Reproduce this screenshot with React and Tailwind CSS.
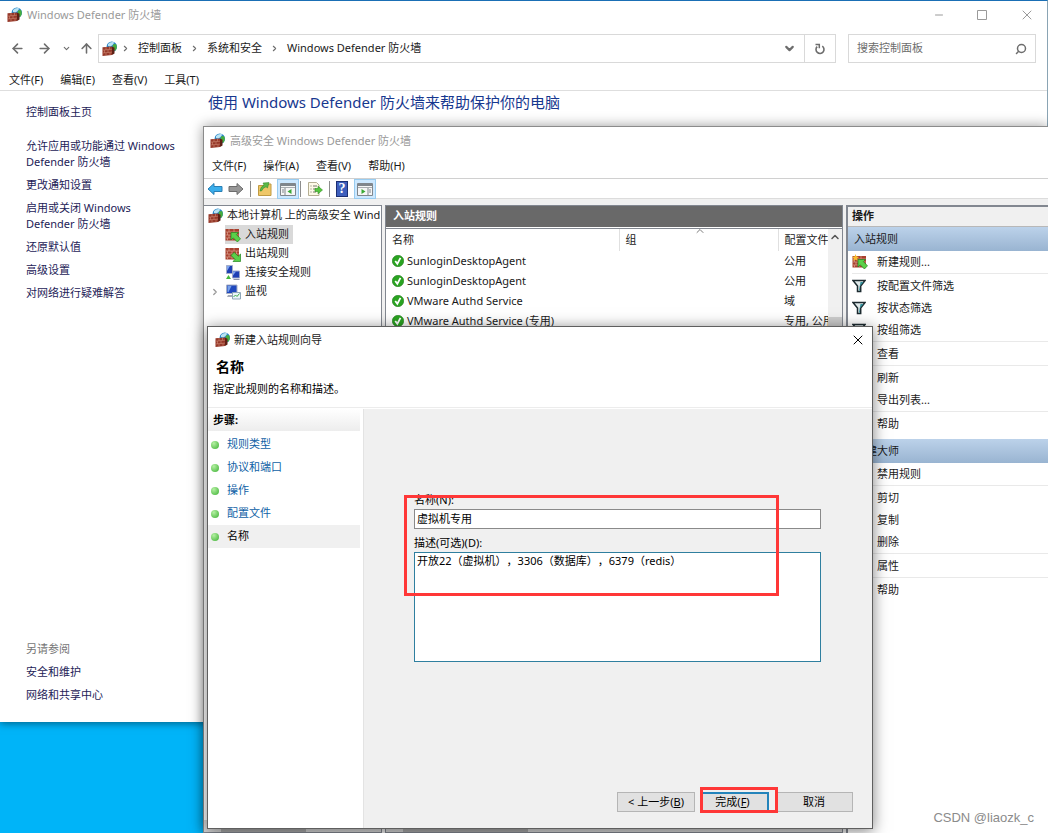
import React from "react";
import clsx from "clsx";
import {ArrowLeft, ArrowRight, ArrowUp, ChevronDown, ChevronRight, ChevronUp, Minus, Search, X} from "lucide-react";

const FirewallIcon = () => (
  <svg width="16" height="16" viewBox="0 0 16 16" className="shrink-0" aria-hidden="true">
    <circle cx="9.8" cy="5.8" r="5.2" fill="#2b86c8" />
    <path d="M6 3 Q8.5 0.5 12 1.2 Q12 3 10.5 4 L8.5 5.5 L6 5z" fill="#b9e3f3" />
    <path d="M11 3.5 L14 3 Q16 7 13 10 L10.5 7z" fill="#46ad3e" />
    <path d="M0.5 6.2 L10 5.4 V14 L0.5 15z" fill="#96392a" />
    <path d="M0.5 9.2 L10 8.2 M0.5 12 L10 11.1 M4 6 V9 M7.5 5.6 V8.3 M2.5 9 V12 M6 8.6 V11.5 M4 11.7 V14.5 M8 11.4 V14.2" stroke="#cf8a73" strokeWidth="0.6" />
    <path d="M10 5.4 L12.5 6.8 V12.5 L10 14z" fill="#5d2015" />
  </svg>
);

const RuleIcon = ({out, star}) => (
  <svg width="16" height="16" viewBox="0 0 16 16" className="shrink-0" aria-hidden="true">
    <rect x="0.5" y="2" width="13.5" height="11.5" fill="#a8402e" />
    <path d="M0.5 5H14M0.5 8H14M0.5 11H14M4 2V5M9 2V5M2.5 5V8M7 5V8M11.5 5V8M4 8V11M2.5 11V13.5M7 11V13.5" stroke="#dba08e" strokeWidth="0.7" />
    {out
      ? <path d="M15.5 15.5 H8 L10 13.4 L6 9.4 L9.2 6.3 L13.2 10.3 L15.5 8z" fill="#5bd04a" stroke="#21851c" strokeWidth="0.7" />
      : <path d="M6 5.5 H13.5 L11.4 7.6 L15.5 11.8 L12.4 15 L8.2 10.8 L6 13z" fill="#5bd04a" stroke="#21851c" strokeWidth="0.7" />}
    {star && <path d="M3.5 0 L4.5 2.5 L7 3 L5 4.5 L5.5 7 L3.5 5.5 L1 7 L2 4.5 L0 3 L2.7 2.5z" fill="#f9bd2d" />}
  </svg>
);

const ConnectionIcon = () => (
  <svg width="16" height="16" viewBox="0 0 16 16" aria-hidden="true">
    <path d="M1.5 0.5h6v8h-6z" fill="#1d3fb4" stroke="#a3adc8" />
    <path d="M7.5 6h7v7h-7z" fill="#1d3fb4" stroke="#9ba6c8" />
    <path d="M2 1h3l-3 5zM8 6.5h3l-3 4z" fill="#7fa5ef" />
    <path d="M8.5 14.5h6" stroke="#8892a8" />
    <path d="M1 14l2.5-4L6 14z" fill="#46b83c" />
  </svg>
);

const MonitorIcon = () => (
  <svg width="16" height="16" viewBox="0 0 16 16" aria-hidden="true">
    <path d="M1.5 1h10.5v8.5H1.5z" fill="#2049bd" stroke="#a8b0c4" />
    <path d="M2.5 2h4l-3 6h-1z" fill="#79a2ea" />
    <path d="M3 11h6l1 2H2z" fill="#a5abb8" />
    <path d="M7.5 8.5h8v6.5h-8z" fill="#eaf4fa" stroke="#8fa7b8" />
    <path d="M8.5 13l2-2 1.5 1.5 2.5-3" fill="none" stroke="#3bab45" />
  </svg>
);

const FilterIcon = () => (
  <svg width="14" height="14" viewBox="0 0 14 14" aria-hidden="true">
    <path d="M1 1.5h12L8.7 7v5.5H5.5V7z" fill="#dfe9ea" stroke="#1d2b30" strokeWidth="1.5" />
    <path d="M8.5 3h3L8 7v4.5H7z" fill="#2f8f99" />
  </svg>
);

const CheckIcon = () => (
  <svg width="12" height="12" viewBox="0 0 13 13" className="shrink-0" aria-hidden="true">
    <circle cx="6.5" cy="6.5" r="6.2" fill="#2aa321" stroke="#1a7414" strokeWidth="0.6" />
    <path d="M3.5 6.5 L5.8 9.5 L9.2 3.2" fill="none" stroke="#fff" strokeWidth="1.9" />
  </svg>
);

const MaximizeIcon = () => (
  <svg width="10" height="10" viewBox="0 0 10 10" aria-hidden="true">
    <path d="M0.5 0.5h9v9h-9z" fill="none" stroke="currentColor" />
  </svg>
);

const RefreshIcon = () => (
  <svg width="12" height="12" viewBox="0 0 12 12" fill="none" stroke="currentColor" aria-hidden="true">
    <path d="M8.3 3.2 A4 4 0 1 1 3.2 3.6" strokeWidth="1.6" />
    <path d="M1.5 1.5 H5.3 V5.3" strokeWidth="1.5" />
  </svg>
);

const BigArrow = ({back}) => (
  <svg width="16" height="16" viewBox="0 0 16 16" aria-hidden="true">
    {back
      ? <path d="M1 8 L7 2.5 V5.5 H15 V10.5 H7 V13.5z" fill="#3aaeec" stroke="#2a7fb4" />
      : <path d="M15 8 L9 2.5 V5.5 H1 V10.5 H9 V13.5z" fill="#979797" stroke="#6c6c6c" />}
  </svg>
);

const FolderUpIcon = () => (
  <svg width="16" height="16" viewBox="0 0 16 16" aria-hidden="true">
    <path d="M1.5 4.5h7l1-1.5h4.5v11.5H1.5z" fill="#efc768" stroke="#c09a42" />
    <path d="M3 10 Q3.5 5.5 7 4 L6 2 L12 1.5 L10.5 7 L9 5.8 Q6 6.5 4.5 10z" fill="#5cb947" stroke="#2b8120" strokeWidth="0.5" />
  </svg>
);

const PaneIcon = ({right}) => (
  <svg width="16" height="16" viewBox="0 0 16 16" aria-hidden="true">
    <path d="M0.5 2.5h15v12H0.5z" fill="#f6f6f6" stroke="#80868c" />
    <path d="M1 4h14" stroke="#80868c" strokeWidth="2" />
    <path d="M1 6.5h14" stroke="#a9adb1" />
    {right ? <path d="M11 7v7M12 9h2M12 11h2" stroke="#80868c" /> : <path d="M5 7v7M2 9h2M2 11h2" stroke="#80868c" />}
    {right ? <path d="M4.5 8 L8.5 10.5 L4.5 13z" fill="#39a935" /> : <path d="M11.5 8 L7.5 10.5 L11.5 13z" fill="#39a935" />}
  </svg>
);

const ExportIcon = () => (
  <svg width="16" height="16" viewBox="0 0 16 16" aria-hidden="true">
    <path d="M1.5 1.5h8l2.5 2.5v10.5H1.5z" fill="#fdf9e7" stroke="#b5ae93" />
    <path d="M3.5 5h1M3.5 8h1M3.5 11h1M6 5h4M6 8h3M6 11h3" stroke="#77776b" />
    <path d="M8 7.5h3V5.2L15.5 9 11 12.8v-2.3H8z" fill="#55c63c" stroke="#2f8f22" strokeWidth="0.6" />
  </svg>
);

const HelpIcon = () => (
  <span className="flex h-4 w-3 items-center justify-center border border-[#1b2f74] bg-[#3e5fbd] font-['Liberation_Serif',serif] text-sm font-bold text-white">?</span>
);

const MenuBar = ({items, className}) => (
  <nav className={clsx("flex items-center gap-[17px]", className)}>
    {items.map((item) => <button key={item} className="whitespace-nowrap">{item}</button>)}
  </nav>
);

const sideLinks = ["更改通知设置", "启用或关闭 Windows Defender 防火墙", "还原默认值", "高级设置", "对网络进行疑难解答"];

const ControlPanelWindow = () => (
  <section className="absolute inset-x-0 top-0 flex h-[722px] flex-col border-t border-r border-t-[#1a6fb5] border-r-[#8aa4b4] bg-white shadow-[0_1px_8px_rgba(0,0,0,0.5)]">
    <header className="flex h-7 items-center pl-[7px] text-[#9a9a9a]">
      <FirewallIcon />
      <h1 className="ml-1 flex-1">Windows Defender 防火墙</h1>
      <button aria-label="最小化" className="px-4"><Minus size={12} strokeWidth={2} /></button>
      <button aria-label="最大化" className="px-4"><MaximizeIcon /></button>
      <button aria-label="关闭" className="pr-3 pl-4"><X size={16} strokeWidth={1.5} /></button>
    </header>
    <div className="mt-[5px] flex h-[29px] items-center pr-[11px] text-[#6d6d6d]">
      <button aria-label="后退" className="ml-[10px]"><ArrowLeft size={15} strokeWidth={2.5} /></button>
      <button aria-label="前进" className="ml-3"><ArrowRight size={15} strokeWidth={2.5} /></button>
      <button aria-label="历史" className="ml-2.5"><ChevronDown size={9} strokeWidth={3} /></button>
      <button aria-label="向上" className="mr-1 ml-2"><ArrowUp size={15} strokeWidth={2.5} /></button>
      <div className="flex h-full flex-1 items-center border border-[#d9d9d9] pl-[3px]">
        <FirewallIcon />
        <ChevronRight size={9} strokeWidth={3} className="ml-[3px]" />
        <a href="#panel" className="ml-2 text-[#1a1a1a]">控制面板</a>
        <ChevronRight size={9} strokeWidth={3} className="ml-2" />
        <a href="#security" className="ml-2 text-[#1a1a1a]">系统和安全</a>
        <ChevronRight size={9} strokeWidth={3} className="ml-2" />
        <a href="#firewall" className="ml-2 flex-1 text-[#1a1a1a]">Windows Defender 防火墙</a>
        <button aria-label="展开" className="px-2"><ChevronDown size={13} strokeWidth={4} /></button>
        <button aria-label="刷新" className="flex h-full w-[31px] items-center justify-center border-l border-[#d9d9d9]"><RefreshIcon /></button>
      </div>
      <div className="ml-3 flex h-full w-[188px] items-center border border-[#d9d9d9] px-2">
        <input aria-label="搜索" placeholder="搜索控制面板" className="min-w-0 flex-1 outline-none placeholder:text-[#6d6d6d]" />
        <Search size={12} strokeWidth={3} className="-scale-x-100" />
      </div>
    </div>
    <MenuBar items={["文件(F)", "编辑(E)", "查看(V)", "工具(T)"]} className="h-7 border-b border-[#dedede] pt-2 pl-[9px] text-[#1a1a1a]" />
    <div className="flex min-h-0 flex-1">
      <aside className="flex w-[200px] flex-col justify-between pt-[13px] pr-3 pb-[19px] pl-[26px] leading-4 text-[#1d2257]">
        <div className="flex flex-col gap-[7px]">
          <a href="#home">控制面板主页</a>
          <a href="#allow" className="mt-[11px]">允许应用或功能通过 Windows<br />Defender 防火墙</a>
          {sideLinks.map((link) => <a key={link} href="#link" className="max-w-[130px]">{link}</a>)}
        </div>
        <div className="flex flex-col gap-[7px]">
          <h2 className="text-[#767676]">另请参阅</h2>
          <a href="#maintenance">安全和维护</a>
          <a href="#network">网络和共享中心</a>
        </div>
      </aside>
      <main className="pl-2 text-[15px] leading-[22px] text-[#17388f]">使用 Windows Defender 防火墙来帮助保护你的电脑</main>
    </div>
  </section>
);

const tree = [
  {label: "入站规则", icon: <RuleIcon />, selected: true},
  {label: "出站规则", icon: <RuleIcon out />},
  {label: "连接安全规则", icon: <ConnectionIcon />},
  {label: "监视", icon: <MonitorIcon />, expandable: true},
];

const rules = [
  ["SunloginDesktopAgent", "公用"],
  ["SunloginDesktopAgent", "公用"],
  ["VMware Authd Service", "域"],
  ["VMware Authd Service (专用)", "专用, 公用"],
];

const ruleActions = [
  {label: "新建规则...", icon: <RuleIcon star />, line: true},
  {label: "按配置文件筛选", icon: <FilterIcon />},
  {label: "按状态筛选", icon: <FilterIcon />},
  {label: "按组筛选", icon: <FilterIcon />, line: true},
  {label: "查看", line: true},
  {label: "刷新"},
  {label: "导出列表...", line: true},
  {label: "帮助"},
];

const itemActions = [
  {label: "禁用规则", line: true},
  {label: "剪切"},
  {label: "复制"},
  {label: "删除", line: true},
  {label: "属性", line: true},
  {label: "帮助"},
];

const ActionList = ({title, items, titleClass}) => (
  <div>
    <h3 className={clsx("h-6 bg-linear-to-b from-[#bcd2ea] to-[#99b4d1] leading-6", titleClass)}>{title}</h3>
    <ul className="pl-1">
      {items.map(({label, icon, line}) => (
        <li key={label} className={clsx(line && "mb-px border-b border-[#e9e9e9]")}>
          <button className="flex h-[22px] w-full items-center">
            <span className="w-[25px]">{icon}</span>
            {label}
          </button>
        </li>
      ))}
    </ul>
  </div>
);

const ScrollBar = ({thumb}) => (
  <div className="mt-auto flex h-3 items-center bg-[#d6d6d6] px-[17px]">
    <div className={clsx("h-full bg-[#aaaaaa]", thumb)}></div>
  </div>
);

const SecurityWindow = () => (
  <section className="absolute top-[126px] right-0 bottom-0 left-[203px] flex flex-col border-t border-l border-[#8b8b8b] bg-white text-[#1a1a1a] shadow-[0_0_12px_rgba(0,0,0,0.4)]">
    <header className="flex h-7 items-center pl-1.5 text-[#9a9a9a]">
      <FirewallIcon />
      <h2 className="ml-1">高级安全 Windows Defender 防火墙</h2>
    </header>
    <MenuBar items={["文件(F)", "操作(A)", "查看(V)", "帮助(H)"]} className="h-6 border-b border-[#d0d0d0] pl-2" />
    <div className="flex h-5 items-center border-b border-[#dcdcdc] pl-[3px]">
      <button aria-label="后退"><BigArrow back /></button>
      <button aria-label="前进" className="ml-[5px]"><BigArrow /></button>
      <span className="mx-1.5 h-4 w-px bg-[#8d8d8d]"></span>
      <button aria-label="向上一级"><FolderUpIcon /></button>
      <button aria-label="控制台树" className="ml-1 flex h-5 w-[22px] items-center justify-center border border-[#99ccf0] bg-[#cce8ff]"><PaneIcon /></button>
      <span className="mr-1.5 ml-px h-4 w-px bg-[#8d8d8d]"></span>
      <button aria-label="导出列表"><ExportIcon /></button>
      <span className="mx-1.5 h-4 w-px bg-[#8d8d8d]"></span>
      <button aria-label="帮助"><HelpIcon /></button>
      <button aria-label="操作窗格" className="ml-1.5 flex h-5 w-[22px] items-center justify-center border border-[#99ccf0] bg-[#cce8ff]"><PaneIcon right /></button>
    </div>
    <div className="flex min-h-0 flex-1 gap-[3px] bg-[#f0f0f0] pt-1.5">
      <div className="flex w-[178px] flex-col overflow-hidden border border-l-0 border-[#828790] bg-white">
        <div className="flex h-[19px] shrink-0 items-center pl-1 whitespace-nowrap">
          <FirewallIcon />
          <span className="ml-[3px] min-w-0 flex-1 overflow-hidden">本地计算机 上的高级安全 Wind</span>
        </div>
        <ul>
          {tree.map(({label, icon, selected, expandable}) => (
            <li key={label} className="flex h-[19px] items-center pl-1.5">
              <span className="w-[15px]">{expandable && <ChevronRight size={10} strokeWidth={3} className="text-[#9a9a9a]" />}</span>
              <button className={clsx("flex h-[19px] items-center gap-1 pr-1", selected && "bg-[#d9d9d9]")}>{icon}{label}</button>
            </li>
          ))}
        </ul>
        <ScrollBar thumb="w-[85px]" />
      </div>
      <div className="flex min-w-0 flex-1 flex-col border border-[#828790] bg-white">
        <h3 className="h-[21px] bg-[#696969] pl-[7px] leading-5 font-bold text-white">入站规则</h3>
        <div className="mt-px flex min-h-0 flex-1 border-t border-[#828790]">
          <div className="relative min-w-0 flex-1 overflow-hidden">
            <table className="w-full table-fixed">
              <thead>
                <tr className="h-[22px] text-left">
                  <th className="pl-1.5 font-normal">名称</th>
                  <th className="w-[159px] border-l border-[#e0e0e0] pl-1.5 font-normal">组</th>
                  <th className="w-[50px] overflow-hidden border-l border-[#e0e0e0] pl-1.5 font-normal whitespace-nowrap">配置文件</th>
                </tr>
              </thead>
              <tbody>
                {rules.map(([name, profile], i) => (
                  <tr key={i} className="h-5">
                    <td className="pl-1.5"><span className="flex items-center gap-[3px] whitespace-nowrap"><CheckIcon />{name}</span></td>
                    <td></td>
                    <td className="overflow-hidden pl-1.5 whitespace-nowrap">{profile}</td>
                  </tr>
                ))}
              </tbody>
            </table>
            <ChevronUp size={12} className="absolute -top-1 right-[122px] text-[#7a7a7a]" />
          </div>
          <div className="flex w-[14px] flex-col items-center bg-[#f0f0f0] pt-0.5">
            <ChevronUp size={12} strokeWidth={3} className="text-[#555]" />
            <div className="mt-[74px] h-20 w-full bg-[#cdcdcd]"></div>
          </div>
        </div>
        <ScrollBar thumb="w-[125px]" />
      </div>
      <aside className="w-[202px] overflow-hidden border-t-2 border-l-2 border-[#828790] bg-white">
        <h3 className="h-5 border-b border-[#b8b8b8] bg-[#f0f0f0] pl-1 leading-[18px] font-bold">操作</h3>
        <ActionList title="入站规则" items={ruleActions} titleClass="pl-1.5" />
        <div className="mt-1"><ActionList title="建大师" items={itemActions} titleClass="pl-[18px]" /></div>
      </aside>
    </div>
  </section>
);

const steps = ["规则类型", "协议和端口", "操作", "配置文件", "名称"];

const WizardDialog = () => (
  <section role="dialog" aria-labelledby="wizard-title" className="absolute top-[326px] left-[207px] flex h-[503px] w-[666px] flex-col border border-[#5f5f5f] bg-white text-black shadow-[0_2px_14px_rgba(0,0,0,0.5)]">
    <header className="flex h-[26px] items-center pl-[7px]">
      <FirewallIcon />
      <h2 id="wizard-title" className="ml-[3px] flex-1 text-[#1a1a1a]">新建入站规则向导</h2>
      <button aria-label="关闭" className="pr-1.5"><X size={16} strokeWidth={1.5} /></button>
    </header>
    <div className="h-[55px] border-b border-[#ececec] pl-[5px]">
      <h3 className="pl-[3px] text-sm leading-7 font-bold">名称</h3>
      <p className="leading-4">指定此规则的名称和描述。</p>
    </div>
    <div className="flex min-h-0 flex-1 pt-px">
      <aside className="w-[153px] pr-px">
        <h4 className="h-[22px] bg-linear-to-b from-white to-[#ededed] pl-[5px] leading-[22px] font-bold">步骤:</h4>
        <ol className="pt-0.5">
          {steps.map((step) => (
            <li key={step} className={clsx("flex h-[23px] items-center gap-2 pl-[3px]", step === "名称" ? "bg-[#f0f0f0]" : "text-[#0f5fa6]")}>
              <span className="h-2 w-2 rounded-full bg-radial-[at_35%_30%] from-[#b4f0a2] to-[#3bb032]"></span>
              {step}
            </li>
          ))}
        </ol>
      </aside>
      <form className="ml-0.5 flex flex-1 flex-col border-l border-[#e3e3e3] bg-[#f0f0f0] pt-[82px] pr-[19px] pb-4 pl-[50px]">
        <label htmlFor="rule-name" className="leading-[18px]">名称(N):</label>
        <input id="rule-name" defaultValue="虚拟机专用" className="mr-8 h-5 border border-[#8a8a8a] bg-white px-0.5 pb-0.5 outline-none" />
        <label htmlFor="rule-desc" className="mt-[5px] leading-[18px]">描述(可选)(D):</label>
        <textarea id="rule-desc" defaultValue="开放22（虚拟机），3306（数据库），6379（redis）" className="mr-8 h-[110px] resize-none border border-[#2f7f9f] bg-white px-0.5 leading-4 outline-none [text-spacing-trim:space-all]"></textarea>
        <div className="mt-auto flex justify-end">
          <button type="button" className="h-5 w-[78px] border border-[#b5b5b5] bg-[#e1e1e1]">&lt; 上一步(<u>B</u>)</button>
          <button type="submit" className="ml-[5px] h-5 w-[69px] border-2 border-[#2484bb] bg-[#e1e1e1] pr-1">完成(<u>F</u>)</button>
          <button type="button" className="ml-1.5 h-5 w-[78px] border border-[#b5b5b5] bg-[#e1e1e1]">取消</button>
        </div>
      </form>
    </div>
    <div className="pointer-events-none absolute top-[168px] left-[196px] h-[101px] w-[375px] border-3 border-[#ff3737]"></div>
    <div className="pointer-events-none absolute top-[460px] left-[492px] h-[26px] w-[78px] border-3 border-[#ff3737]"></div>
  </section>
);

export default function App() {
  return (
    <div className="relative min-h-screen overflow-hidden bg-[#00b4f8] font-['Noto_Sans','Noto_Sans_CJK_SC',sans-serif] text-[11px]">
      <ControlPanelWindow />
      <SecurityWindow />
      <WizardDialog />
      <span className="absolute right-[14px] bottom-1.5 font-['Liberation_Sans',sans-serif] text-[13px] text-[#8b8b8b]">CSDN @liaozk_c</span>
    </div>
  );
}
